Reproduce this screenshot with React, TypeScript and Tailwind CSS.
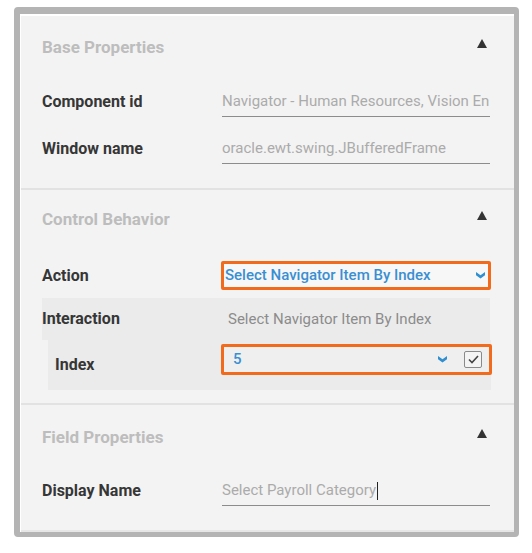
import React from "react";

const Triangle = () => (
  <svg width="10" height="9" viewBox="0 0 10 9" className="mb-[10px] mr-[3px]">
    <polygon points="5,0 10,9 0,9" fill="#333" />
  </svg>
);

const Chevron = () => (
  <svg width="9" height="7" viewBox="0 0 9 7">
    <path d="M0 0 L4.5 3.2 L9 0 L9 3.2 L4.5 6.6 L0 3.2 Z" fill="#2f8fd0" />
  </svg>
);

function Header({ title }: { title: string }) {
  return (
    <div className="flex h-[32px] items-center justify-between">
      <span className="text-[17px] font-bold text-[#bdbdbd]">{title}</span>
      <Triangle />
    </div>
  );
}

function FieldRow({ label, value, cursor, className = "" }: { label: string; value: string; cursor?: boolean; className?: string }) {
  return (
    <div className={"flex items-center " + className}>
      <span className="w-[180px] shrink-0 text-[16px] font-bold text-[#363636]">{label}</span>
      <div className="flex h-[30px] flex-1 items-center border-b-[1.5px] border-[#8c8c8c] text-[15px] text-[#ababab]">
        <span className="whitespace-nowrap overflow-hidden">{value}</span>
        {cursor && <span className="ml-[1px] h-[18px] w-[1px] bg-[#222]" />}
      </div>
    </div>
  );
}

export default function App() {
  return (
    <div className="pl-[14px] pt-[7px]" style={{ fontFamily: "Roboto, 'Noto Sans', sans-serif" }}>
      <div className="h-[530px] w-[505px] rounded-[4px] border-b-[5px] border-l-[6px] border-r-[5px] border-t-[7px] border-[#b4b4b4] bg-[#f3f3f3]">
        <div className="flex h-full flex-col border-l border-t-2 border-white">
          {/* Base Properties */}
          <section className="h-[172px] pl-[21px] pr-[24px] pt-[16px]">
            <Header title="Base Properties" />
            <FieldRow className="mt-[23px]" label="Component id" value="Navigator - Human Resources, Vision En" />
            <FieldRow className="mt-[17px]" label="Window name" value="oracle.ewt.swing.JBufferedFrame" />
          </section>
          <div className="h-[2px] bg-[#e2e2e2]" />

          {/* Control Behavior */}
          <section className="h-[213px] pl-[21px] pr-[23px] pt-[14px]">
            <div className="pr-[1px]">
              <Header title="Control Behavior" />
            </div>
            <div className="mt-[25px] flex items-center">
              <span className="w-[179px] shrink-0 text-[16px] font-bold text-[#363636]">Action</span>
              <div className="flex h-[29px] flex-1 items-center justify-between rounded-[2px] border-[3px] border-[#f26b1d] bg-[#f7f7f7] pl-[1px] pr-[3px]">
                <span className="text-[15px] font-medium text-[#3a8fd2]">Select Navigator Item By Index</span>
                <Chevron />
              </div>
            </div>
            <div className="mt-[8px] mr-[1px] bg-[#ebebeb]">
              <div className="flex h-[42px] items-center">
                <span className="w-[186px] shrink-0 text-[16px] font-bold text-[#363636]">Interaction</span>
                <span className="text-[15px] text-[#8c8c8c]">Select Navigator Item By Index</span>
              </div>
            </div>
            <div className="ml-[6px] flex h-[50px] bg-[#ebebeb]">
              <span className="flex w-[173px] shrink-0 items-center pl-[7px] text-[16px] font-bold text-[#363636]">Index</span>
              <div className="-mr-[1px] mt-[4px] flex h-[31px] flex-1 items-center rounded-[2px] border-[3px] border-[#f26b1d] bg-[#efefef] pl-[9px] pr-[7px]">
                <span className="flex-1 text-[15px] font-medium text-[#3a8fd2]">5</span>
                <Chevron />
                <span className="ml-[17px] flex h-[17px] w-[18px] items-center justify-center rounded-[2px] border-[1.5px] border-[#8a8a8a] bg-[#f4f4f4]">
                  <svg width="11" height="9" viewBox="0 0 11 9">
                    <path d="M1 4.5 L4 7.5 L10 1" fill="none" stroke="#444" strokeWidth="1.6" />
                  </svg>
                </span>
              </div>
            </div>
          </section>
          <div className="h-[2px] bg-[#e2e2e2]" />

          {/* Field Properties */}
          <section className="flex-1 pl-[21px] pr-[24px] pt-[17px]">
            <Header title="Field Properties" />
            <FieldRow className="mt-[22px]" label="Display Name" value="Select Payroll Category" cursor />
          </section>
          <div className="h-[2px] bg-[#e6e6e6]" />
        </div>
      </div>
    </div>
  );
}
